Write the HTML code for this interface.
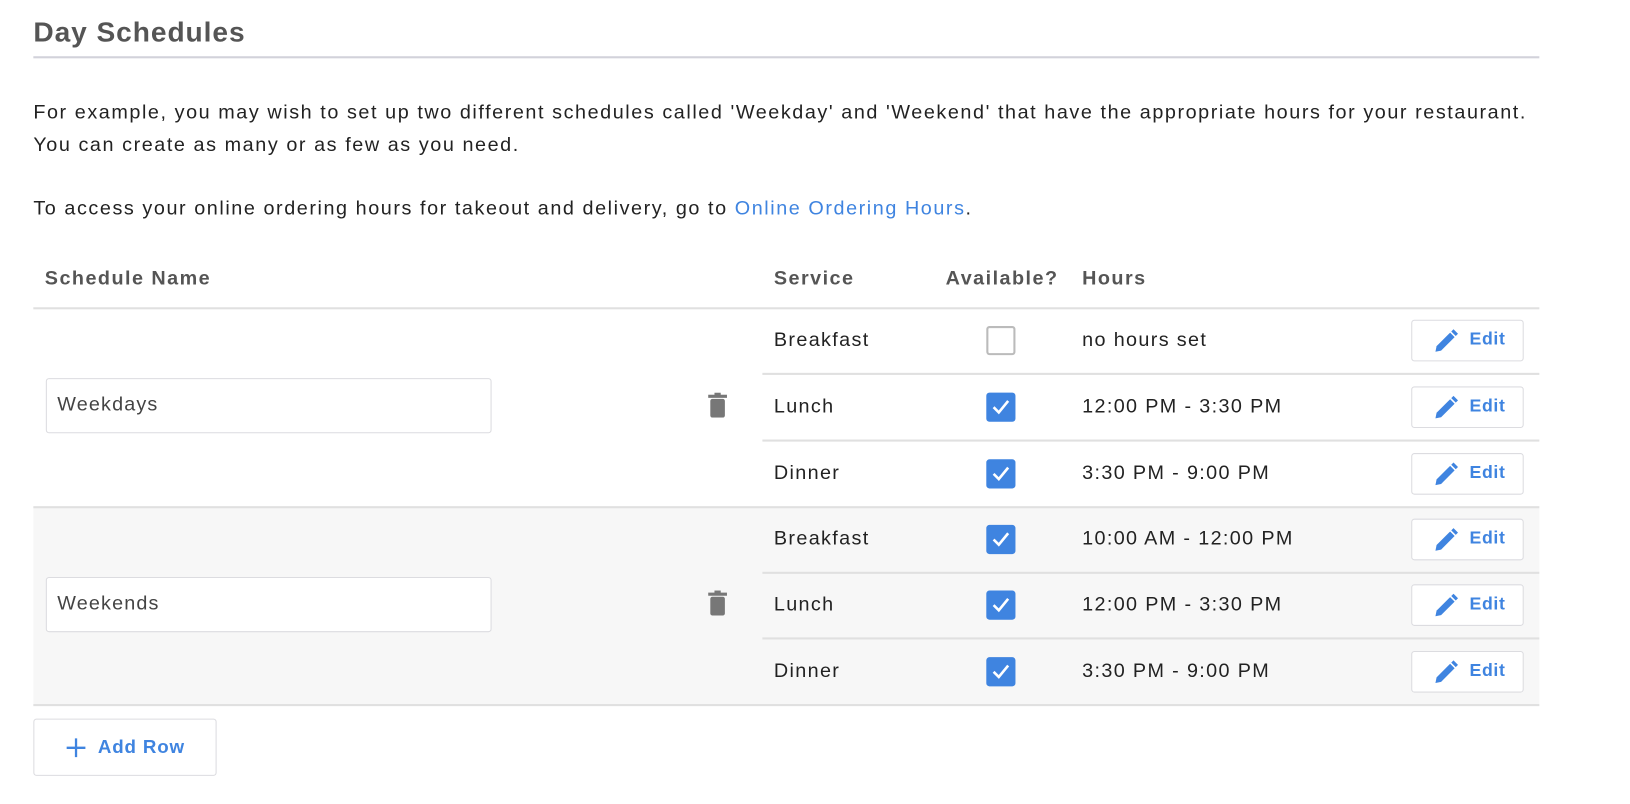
<!DOCTYPE html>
<html><head><style>
body{margin:0;background:#fff;font-family:"Liberation Sans",sans-serif;color:#333;width:1630px;height:804px;position:relative;overflow:hidden}
#w{position:absolute;left:0;top:0;width:1566px;height:772px;transform:scale(1.0415);transform-origin:0 0}
.a{position:absolute}
h1{position:absolute;left:32px;top:16px;margin:0;font-size:27px;font-weight:bold;color:#555;letter-spacing:0.9px}
.hr{position:absolute;left:32px;width:1446px;top:54px;height:2px;background:#d2d2da}
p{position:absolute;left:32px;margin:0;font-size:19px;line-height:31px;color:#222;letter-spacing:1.5px;white-space:nowrap}
.th{position:absolute;top:257px;font-size:19px;font-weight:bold;color:#555;letter-spacing:1.4px}
.line{position:absolute;height:2px;background:#e0e0e0}
.cell{position:absolute;font-size:19px;color:#222;letter-spacing:1.3px}
.cb{position:absolute;left:947px;width:24px;height:24px;border-radius:3px}
.cb.on{background:#3f84e0;border:2px solid #3f84e0}
.cb.off{background:#fff;border:2px solid #bbb}
.edit{position:absolute;left:1355px;width:106px;height:38px;border:1px solid #dcdce0;border-radius:3px;background:#fff;color:#3f84e0;font-weight:bold;font-size:17px;letter-spacing:0.6px}
.inp{position:absolute;left:44px;width:428px;height:53px;border:1px solid #dcdce0;border-radius:3px;background:#fff;font-size:19px;color:#444;box-sizing:border-box;padding:14px 10px;letter-spacing:1.1px}
</style></head><body><div id="w">
<h1>Day Schedules</h1>
<div class="hr"></div>
<p style="top:93px">For example, you may wish to set up two different schedules called 'Weekday' and 'Weekend' that have the appropriate hours for your restaurant.<br>You can create as many or as few as you need.</p>
<p style="top:185px">To access your online ordering hours for takeout and delivery, go to <span style="color:#3f84e0">Online Ordering Hours</span>.</p>
<div class="th" style="left:43px">Schedule Name</div>
<div class="th" style="left:743px">Service</div>
<div class="th" style="left:908px">Available?</div>
<div class="th" style="left:1039px">Hours</div>
<div class="line" style="left:32px;width:1446px;top:295px"></div>
<div class="a" style="left:32px;width:1446px;top:487px;height:189px;background:#f7f7f7"></div>
<div class="line" style="left:732px;width:746px;top:358px"></div>
<div class="line" style="left:732px;width:746px;top:422px"></div>
<div class="line" style="left:32px;width:1446px;top:486px"></div>
<div class="line" style="left:732px;width:746px;top:549px"></div>
<div class="line" style="left:732px;width:746px;top:612px"></div>
<div class="line" style="left:32px;width:1446px;top:676px"></div>
<div class="inp" style="top:363px">Weekdays</div>
<div class="inp" style="top:554px">Weekends</div>
<svg class="a" style="left:679px;top:377px" width="20" height="24" viewBox="0 0 20 24"><rect x="3" y="6" width="14" height="18" rx="2" fill="#777"/><rect x="1" y="2" width="18" height="3" fill="#777"/><rect x="7" y="0" width="6" height="3" fill="#777"/></svg>
<svg class="a" style="left:679px;top:567px" width="20" height="24" viewBox="0 0 20 24"><rect x="3" y="6" width="14" height="18" rx="2" fill="#777"/><rect x="1" y="2" width="18" height="3" fill="#777"/><rect x="7" y="0" width="6" height="3" fill="#777"/></svg>
<div id="rows"></div>
<div class="a" style="left:32px;top:690px;width:174px;height:53px;border:1px solid #dcdce0;border-radius:3px;background:#fff">
<svg class="a" style="left:30px;top:17px" width="20" height="20" viewBox="0 0 20 20"><path d="M10 1v18M1 10h18" stroke="#3f84e0" stroke-width="2.2"/></svg>
<span class="a" style="left:61px;top:16px;color:#3f84e0;font-weight:bold;font-size:18px;letter-spacing:0.8px">Add Row</span></div>
</div>
<script>
var d=[["Breakfast",0,"no hours set",327],["Lunch",1,"12:00 PM - 3:30 PM",391],["Dinner",1,"3:30 PM - 9:00 PM",455],["Breakfast",1,"10:00 AM - 12:00 PM",518],["Lunch",1,"12:00 PM - 3:30 PM",581],["Dinner",1,"3:30 PM - 9:00 PM",645]];
var h="";
d.forEach(function(r){var y=r[3];
h+='<div class="cell" style="left:743px;top:'+(y-11)+'px">'+r[0]+'</div>';
h+='<div class="cb '+(r[1]?'on':'off')+'" style="top:'+(y-14)+'px">'+(r[1]?'<svg width="24" height="24" viewBox="0 0 24 24"><path d="M5 12l5 5 9-11" stroke="#fff" stroke-width="2.5" fill="none"/></svg>':'')+'</div>';
h+='<div class="cell" style="left:1039px;top:'+(y-11)+'px">'+r[2]+'</div>';
h+='<div class="edit" style="top:'+(y-20)+'px"><svg class="a" style="left:19px;top:7px" width="26" height="26" viewBox="0 0 24 24"><path d="M3 21l1-5L16 4l4 4L8 20z" fill="#3f84e0"/><path d="M17 3l2-2 4 4-2 2z" fill="#3f84e0"/></svg><span class="a" style="left:55px;top:8px">Edit</span></div>';
});
document.getElementById("rows").innerHTML=h;
</script>
</body></html>
